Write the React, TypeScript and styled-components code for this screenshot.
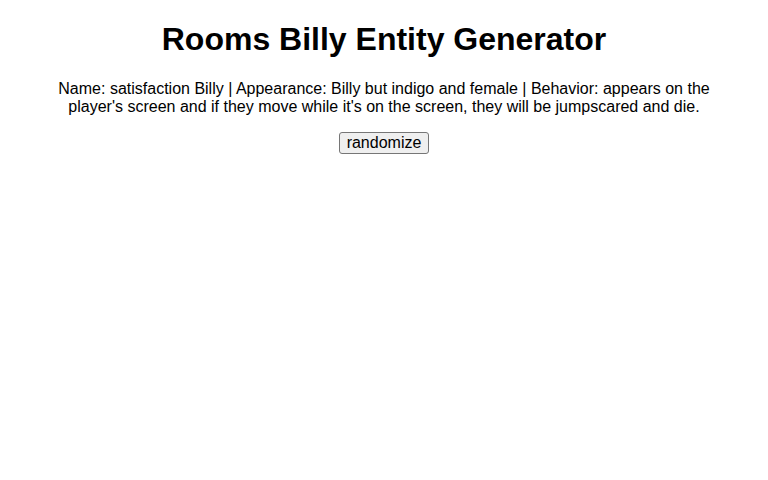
import React, { useState } from "react";
import styled, { createGlobalStyle } from "styled-components";

const Global = createGlobalStyle`
  body {
    margin: 0 8px;
    background: #ffffff;
    color: #000000;
    font-family: "Liberation Sans", Arial, sans-serif;
  }
`;

const Page = styled.main`
  text-align: center;
  padding-top: 0.02px;
`;

const Title = styled.h1`
  font-size: 32px;
  font-weight: bold;
  margin: 21.44px 0;
`;

const Description = styled.p`
  font-size: 16px;
  line-height: normal;
  margin: 16px 0;
  padding: 0 24px;
`;

const RandomButton = styled.button`
  font-family: "Liberation Sans", Arial, sans-serif;
  font-size: 16px;
  padding: 1px 7px;
  background: #efefef;
  border: 1px solid #767676;
  border-radius: 3px;
  color: #000;
  cursor: pointer;
  &:hover {
    background: #e5e5e5;
  }
`;

const names = ["satisfaction Billy", "gloom Billy", "echo Billy"];
const looks = ["Billy but indigo and female", "Billy but tall and grey", "Billy but upside down"];
const behaviors = [
  "appears on the player's screen and if they move while it's on the screen, they will be jumpscared and die.",
  "rushes through the rooms, hide in a locker to survive.",
  "follows the player silently until they look back.",
];

export default function App() {
  const [i, setI] = useState(0);
  const randomize = () => setI(Math.floor(Math.random() * names.length));
  return (
    <>
      <Global />
      <Page>
        <Title>Rooms Billy Entity Generator</Title>
        <Description>
          Name: {names[i]} | Appearance: {looks[i]} | Behavior: {behaviors[i]}
        </Description>
        <RandomButton onClick={randomize}>randomize</RandomButton>
      </Page>
    </>
  );
}
